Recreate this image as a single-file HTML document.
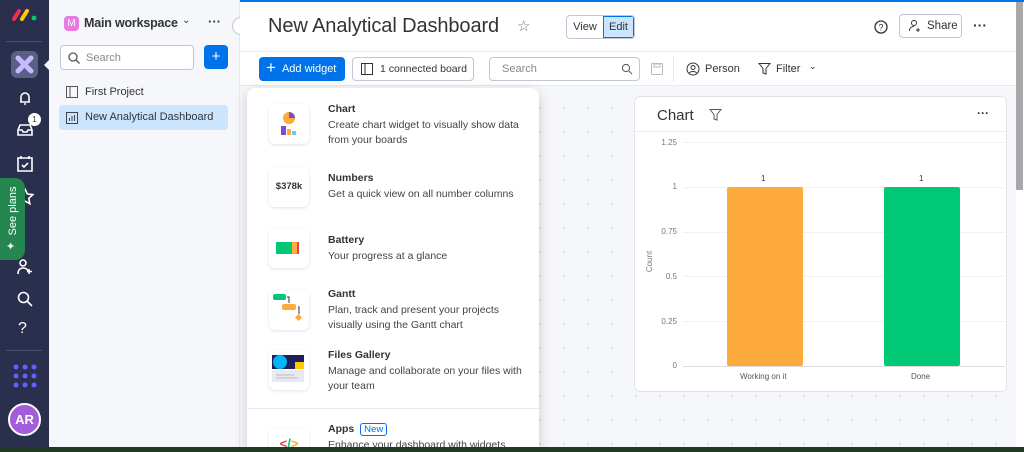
<!DOCTYPE html>
<html><head><meta charset="utf-8"><style>
*{box-sizing:border-box;margin:0;padding:0}
body{width:1024px;height:452px;overflow:hidden;font-family:"Liberation Sans",sans-serif;color:#323338;background:#f6f7fb;position:relative}
.abs{position:absolute}
.nav{left:0;top:0;width:49px;height:447px;background:#292f4c}
.side{left:49px;top:0;width:191px;height:447px;background:#f6f7fb;border-right:1px solid #e6e9ef}
.main{left:240px;top:0;width:776px;height:447px;background:#f6f7fb;background-image:radial-gradient(#d6d8de 0.8px,transparent 1px);background-size:24px 24px}
.ico{stroke:#fff;fill:none;stroke-width:1.6}
.btn{border:1px solid #c3c6d4;border-radius:4px;background:#fff;font-size:11px;display:flex;align-items:center}
.item{position:absolute;left:0;width:292px}
.item .ic{position:absolute;left:22px;width:40px;height:40px;border-radius:6px;background:#fff;box-shadow:0 1px 3px rgba(0,0,0,.12)}
.item b{position:absolute;left:81px;font-size:10.5px;font-weight:bold}
.item p{position:absolute;left:81px;font-size:10.5px;line-height:15px;color:#444;width:200px}
.yl{position:absolute;font-size:8px;color:#777;right:0;text-align:right;width:30px}
.gl{position:absolute;left:0;right:0;height:1px;background:#f2f2f2}
</style></head><body>
<div class="abs nav">
 <div class="abs" style="left:11px;top:8px;width:28px;height:14px">
  <svg width="28" height="14"><line x1="3" y1="11" x2="8" y2="3" stroke="#f62b54" stroke-width="4" stroke-linecap="round"/><line x1="11" y1="11" x2="16" y2="3" stroke="#ffcc00" stroke-width="4" stroke-linecap="round"/><circle cx="23" cy="10" r="2.4" fill="#00ca72"/></svg></div>
 <div class="abs" style="left:6px;top:41px;width:36px;height:1px;background:#4b5170"></div>
 <div class="abs" style="left:11px;top:51px;width:27px;height:27px;border-radius:6px;background:#5a5f85"><svg width="27" height="27"><path d="M7 7L20 20M20 7L7 20" stroke="#c7b8ff" stroke-width="5" stroke-linecap="round"/></svg></div>
 <div class="abs" style="left:44px;top:60px;border:5px solid transparent;border-right-color:#f6f7fb;border-left:0"></div>
 <svg class="abs" style="left:16px;top:89px" width="18" height="18"><path class="ico" d="M4 13h10M5 13V8a4 4 0 018 0v5M8 15h2"/></svg>
 <svg class="abs" style="left:16px;top:121px" width="18" height="18"><path class="ico" d="M2 9l2-5h10l2 5v5H2zM2 9h4l1 2h4l1-2h4"/></svg>
 <div class="abs" style="left:28px;top:113px;width:13px;height:13px;border-radius:50%;background:#fff;color:#333;font-size:8px;text-align:center;line-height:13px">1</div>
 <svg class="abs" style="left:16px;top:155px" width="18" height="18"><path class="ico" d="M2 3h14v13H2zM5 1v3M13 1v3M6 10l2 2 4-4"/></svg>
 <svg class="abs" style="left:16px;top:188px" width="18" height="18"><path class="ico" d="M9 1l2.4 5 5.4.6-4 3.7 1 5.4L9 13l-4.8 2.7 1-5.4-4-3.7L6.6 6z"/></svg>
 <div class="abs" style="left:0;top:178px;width:25px;height:82px;background:#258750;border-radius:0 10px 10px 0"><div style="position:absolute;left:-20px;top:27px;width:66px;transform:rotate(-90deg);color:#fff;font-size:11px;text-align:center">See plans</div><div style="position:absolute;left:6px;top:62px;color:#fff;font-size:11px">✦</div></div>
 <svg class="abs" style="left:16px;top:258px" width="18" height="18"><path class="ico" d="M7 8a3 3 0 100-6 3 3 0 000 6zM2 16c0-4 2-6 5-6s4 1 5 3M13 11v5M11 13.5h5"/></svg>
 <svg class="abs" style="left:16px;top:290px" width="18" height="18"><circle class="ico" cx="7.5" cy="7.5" r="5"/><path class="ico" d="M11 11l5 5"/></svg>
 <div class="abs" style="left:18px;top:320px;color:#fff;font-size:16px">?</div>
 <div class="abs" style="left:6px;top:350px;width:36px;height:1px;background:#4b5170"></div>
 <svg class="abs" style="left:13px;top:364px" width="24" height="24"><g fill="#6161ff"><circle cx="3" cy="3" r="2.5"/><circle cx="12" cy="3" r="2.5"/><circle cx="21" cy="3" r="2.5"/><circle cx="3" cy="12" r="2.5"/><circle cx="12" cy="12" r="2.5"/><circle cx="21" cy="12" r="2.5"/><circle cx="3" cy="21" r="2.5"/><circle cx="12" cy="21" r="2.5"/><circle cx="21" cy="21" r="2.5"/></g></svg>
 <div class="abs" style="left:8px;top:403px;width:33px;height:33px;border-radius:50%;background:#a25ddc;border:2px solid #fff;color:#fff;font-size:13px;font-weight:bold;text-align:center;line-height:29px">AR</div>
</div>
<div class="abs side">
 <div class="abs" style="left:15px;top:16px;width:15px;height:15px;border-radius:4px;background:#e87be0;color:#fff;font-size:10px;text-align:center;line-height:15px">M</div>
 <div class="abs" style="left:35px;top:16px;font-size:12.5px;font-weight:bold;letter-spacing:-0.2px">Main workspace</div>
 <div class="abs" style="left:133px;top:15px;font-size:10px">⌄</div>
 <div class="abs" style="left:159px;top:14px;font-size:13px;font-weight:bold">···</div>
 <div class="abs" style="left:183px;top:17px;width:18px;height:18px;border-radius:50%;background:#fff;border:1px solid #c3c6d4;font-size:10px;text-align:center;line-height:16px;color:#666">‹</div>
 <div class="abs btn" style="left:11px;top:45px;width:134px;height:25px;color:#888;padding-left:6px"><svg width="14" height="14"><circle cx="6" cy="6" r="4" stroke="#555" fill="none" stroke-width="1.3"/><path d="M9 9l3.5 3.5" stroke="#555" stroke-width="1.3"/></svg><span style="margin-left:5px">Search</span></div>
 <div class="abs" style="left:155px;top:45px;width:24px;height:24px;border-radius:4px;background:#0073ea;color:#fff;text-align:center;line-height:23px;font-size:15px">+</div>
 <svg class="abs" style="left:17px;top:86px" width="12" height="12"><rect x=".5" y=".5" width="11" height="11" fill="none" stroke="#555"/><line x1="4" y1="0" x2="4" y2="12" stroke="#555"/></svg>
 <div class="abs" style="left:36px;top:86px;font-size:11px">First Project</div>
 <div class="abs" style="left:10px;top:105px;width:169px;height:25px;border-radius:4px;background:#cce5ff"></div>
 <svg class="abs" style="left:17px;top:112px" width="12" height="12"><rect x=".5" y=".5" width="11" height="11" fill="none" stroke="#444"/><path d="M3.5 9V6M6 9V4M8.5 9V3" stroke="#444"/></svg>
 <div class="abs" style="left:36px;top:111px;font-size:11px">New Analytical Dashboard</div>
</div>
<div class="abs main"></div>
<div class="abs" style="left:240px;top:0;width:784px;height:2px;background:#0073ea"></div>
<div class="abs" style="left:240px;top:2px;width:776px;height:84px;background:#fff;border-bottom:1px solid #e6e9ef"></div>
<div class="abs" style="left:240px;top:51px;width:776px;height:1px;background:#e6e9ef"></div>
<div class="abs" style="left:268px;top:15px;font-size:20px;letter-spacing:-0.1px">New Analytical Dashboard</div>
<div class="abs" style="left:517px;top:17px;font-size:15px;color:#777">☆</div>
<div class="abs btn" style="left:566px;top:15px;width:69px;height:24px;overflow:hidden"><span style="width:36px;text-align:center">View</span><span style="flex:1;height:100%;background:#cce5ff;border:1px solid #0073ea;display:flex;align-items:center;justify-content:center">Edit</span></div>
<svg class="abs" style="left:874px;top:20px" width="14" height="14"><circle cx="7" cy="7" r="6" fill="none" stroke="#333" stroke-width="1.3"/><text x="7" y="10.5" font-size="9" text-anchor="middle" fill="#333" font-family="Liberation Sans">?</text></svg>
<div class="abs btn" style="left:899px;top:14px;width:63px;height:24px;padding-left:8px"><svg width="14" height="14"><circle cx="6" cy="4" r="2.5" fill="none" stroke="#333"/><path d="M1.5 12c0-3 2-4.5 4.5-4.5M10 9v4M8 11h4" fill="none" stroke="#333"/></svg><span style="margin-left:5px;font-size:11.5px">Share</span></div>
<div class="abs" style="left:973px;top:17px;font-size:14px;font-weight:bold">···</div>
<div class="abs" style="left:259px;top:57px;width:86px;height:24px;border-radius:4px;background:#0073ea;color:#fff;font-size:11px;display:flex;align-items:center;padding-left:7px"><span style="font-size:17px;margin-right:6px;margin-top:-2px">+</span>Add widget</div>
<div class="abs btn" style="left:352px;top:57px;width:122px;height:24px;padding-left:8px"><svg width="12" height="12"><rect x=".5" y=".5" width="11" height="11" fill="none" stroke="#333"/><line x1="4" y1="0" x2="4" y2="12" stroke="#333"/></svg><span style="margin-left:7px;font-size:10.5px">1 connected board</span></div>
<div class="abs btn" style="left:489px;top:57px;width:151px;height:24px;padding-left:12px;color:#888;justify-content:space-between;padding-right:6px"><span>Search</span><svg width="12" height="12"><circle cx="5" cy="5" r="3.6" fill="none" stroke="#555"/><path d="M8 8l3 3" stroke="#555"/></svg></div>
<svg class="abs" style="left:651px;top:63px" width="12" height="12"><rect x=".5" y=".5" width="11" height="11" rx="1" fill="none" stroke="#bbb"/><rect x="3" y="1" width="6" height="3" fill="none" stroke="#bbb"/></svg>
<div class="abs" style="left:673px;top:56px;width:1px;height:26px;background:#e6e9ef"></div>
<svg class="abs" style="left:686px;top:62px" width="14" height="14"><circle cx="7" cy="7" r="6" fill="none" stroke="#333"/><circle cx="7" cy="5.5" r="2" fill="none" stroke="#333"/><path d="M3.5 11c1-2 6-2 7 0" fill="none" stroke="#333"/></svg>
<div class="abs" style="left:705px;top:63px;font-size:11px">Person</div>
<svg class="abs" style="left:758px;top:62px" width="13" height="13"><path d="M1 1.5h11L8 6.5V12L5 11V6.5z" fill="none" stroke="#333"/></svg>
<div class="abs" style="left:776px;top:63px;font-size:11px">Filter</div>
<div class="abs" style="left:809px;top:61px;font-size:9px">⌄</div>
<div class="abs" style="left:634px;top:96px;width:373px;height:296px;background:#fff;border:1px solid #e1e3ea;border-radius:6px">
 <div class="abs" style="left:22px;top:10px;font-size:15px">Chart</div>
 <svg class="abs" style="left:74px;top:11px" width="13" height="13"><path d="M1 1.5h11L8 6.5V12L5 11V6.5z" fill="none" stroke="#555"/></svg>
 <div class="abs" style="left:342px;top:9px;font-size:12px;font-weight:bold">···</div>
 <div class="abs" style="left:0;top:34px;width:371px;height:1px;background:#eee"></div>
 <div class="abs" style="left:0;top:40px;width:360px;height:240px">
  <div class="yl" style="left:12px;top:1px">1.25</div>
  <div class="yl" style="left:12px;top:45px">1</div>
  <div class="yl" style="left:12px;top:90px">0.75</div>
  <div class="yl" style="left:12px;top:135px">0.5</div>
  <div class="yl" style="left:12px;top:180px">0.25</div>
  <div class="yl" style="left:12px;top:224px">0</div>
 </div>
 <div class="abs" style="left:48px;top:45px;width:322px;height:185px">
  <div class="gl" style="top:0"></div><div class="gl" style="top:45px"></div><div class="gl" style="top:90px"></div><div class="gl" style="top:134px"></div><div class="gl" style="top:179px"></div><div class="gl" style="top:224px;background:#ddd"></div>
 </div>
 <div class="abs" style="left:4px;top:160px;font-size:8px;color:#777;transform:rotate(-90deg)">Count</div>
 <div class="abs" style="left:92px;top:90px;width:76px;height:179px;background:#fdab3d;border-radius:2px"></div>
 <div class="abs" style="left:249px;top:90px;width:76px;height:179px;background:#00c875;border-radius:2px"></div>
 <div class="abs" style="left:126px;top:77px;font-size:8px">1</div>
 <div class="abs" style="left:284px;top:77px;font-size:8px">1</div>
 <div class="abs" style="left:105px;top:275px;font-size:8px;color:#555">Working on it</div>
 <div class="abs" style="left:276px;top:275px;font-size:8px;color:#555">Done</div>
</div>
<div class="abs" style="left:247px;top:88px;width:292px;height:359px;background:#fff;border-radius:8px 8px 0 0;box-shadow:0 4px 14px rgba(0,0,0,.18);overflow:hidden">
 <div class="item" style="top:0">
  <div class="ic" style="top:16px"><svg width="40" height="40"><circle cx="20" cy="14" r="6" fill="#fdab3d"/><path d="M20 8a6 6 0 016 6h-6z" fill="#784bd1"/><path d="M14 14a6 6 0 0012 0z" fill="#fdab3d"/><rect x="12" y="22" width="5" height="9" fill="#784bd1"/><rect x="18" y="25" width="4" height="6" fill="#fdab3d"/><rect x="23" y="27" width="4" height="4" fill="#66ccff"/></svg></div>
  <b style="top:15px">Chart</b><p style="top:30px">Create chart widget to visually show data from your boards</p></div>
 <div class="item" style="top:0">
  <div class="ic" style="top:79px;font-size:9.5px;font-weight:bold;text-align:center;line-height:40px">$378k</div>
  <b style="top:84px">Numbers</b><p style="top:99px">Get a quick view on all number columns</p></div>
 <div class="item" style="top:0">
  <div class="ic" style="top:140px"><svg width="40" height="40"><rect x="7" y="14" width="16" height="12" fill="#00c875"/><rect x="23" y="14" width="5" height="12" fill="#fdab3d"/><rect x="28" y="14" width="2" height="12" fill="#e2445c"/></svg></div>
  <b style="top:146px">Battery</b><p style="top:161px">Your progress at a glance</p></div>
 <div class="item" style="top:0">
  <div class="ic" style="top:202px"><svg width="40" height="40"><rect x="4" y="4" width="13" height="6" rx="2" fill="#00c875"/><rect x="13" y="14" width="14" height="6" rx="2" fill="#fdab3d"/><path d="M18 7h2v6M29 17h1v7" stroke="#333" fill="none"/><rect x="27" y="25" width="5" height="5" transform="rotate(45 29.5 27.5)" fill="#fdab3d"/></svg></div>
  <b style="top:200px">Gantt</b><p style="top:215px">Plan, track and present your projects visually using the Gantt chart</p></div>
 <div class="item" style="top:0">
  <div class="ic" style="top:262px"><svg width="40" height="40"><rect x="3" y="5" width="32" height="14" fill="#1f1f5c"/><circle cx="11" cy="12" r="7" fill="#00b4f5"/><rect x="26" y="12" width="9" height="7" fill="#ffcb00"/><rect x="3" y="20" width="32" height="12" fill="#e8eaf0"/><path d="M7 25h18M7 28h22" stroke="#b7bbc9"/></svg></div>
  <b style="top:261px">Files Gallery</b><p style="top:276px">Manage and collaborate on your files with your team</p></div>
 <div class="abs" style="left:0;top:320px;width:292px;height:1px;background:#e6e9ef"></div>
 <div class="item" style="top:0">
  <div class="ic" style="top:340px;text-align:center;font-size:13px;font-weight:bold;line-height:32px"><span style="color:#e2445c">&lt;</span><span style="color:#00c875">/</span><span style="color:#fdab3d">&gt;</span></div>
  <b style="top:335px">Apps <span style="font-weight:normal;font-size:9.5px;color:#0073ea;border:1px solid #0073ea;border-radius:3px;padding:0 3px;margin-left:3px">New</span></b><p style="top:350px">Enhance your dashboard with widgets</p></div>
</div>
<div class="abs" style="left:1016px;top:2px;width:8px;height:445px;background:#fff"></div>
<div class="abs" style="left:1016px;top:2px;width:7px;height:188px;background:#a8a8a8"></div>
<div class="abs" style="left:0;top:447px;width:1024px;height:5px;background:#1f3b22"></div>
</body></html>
